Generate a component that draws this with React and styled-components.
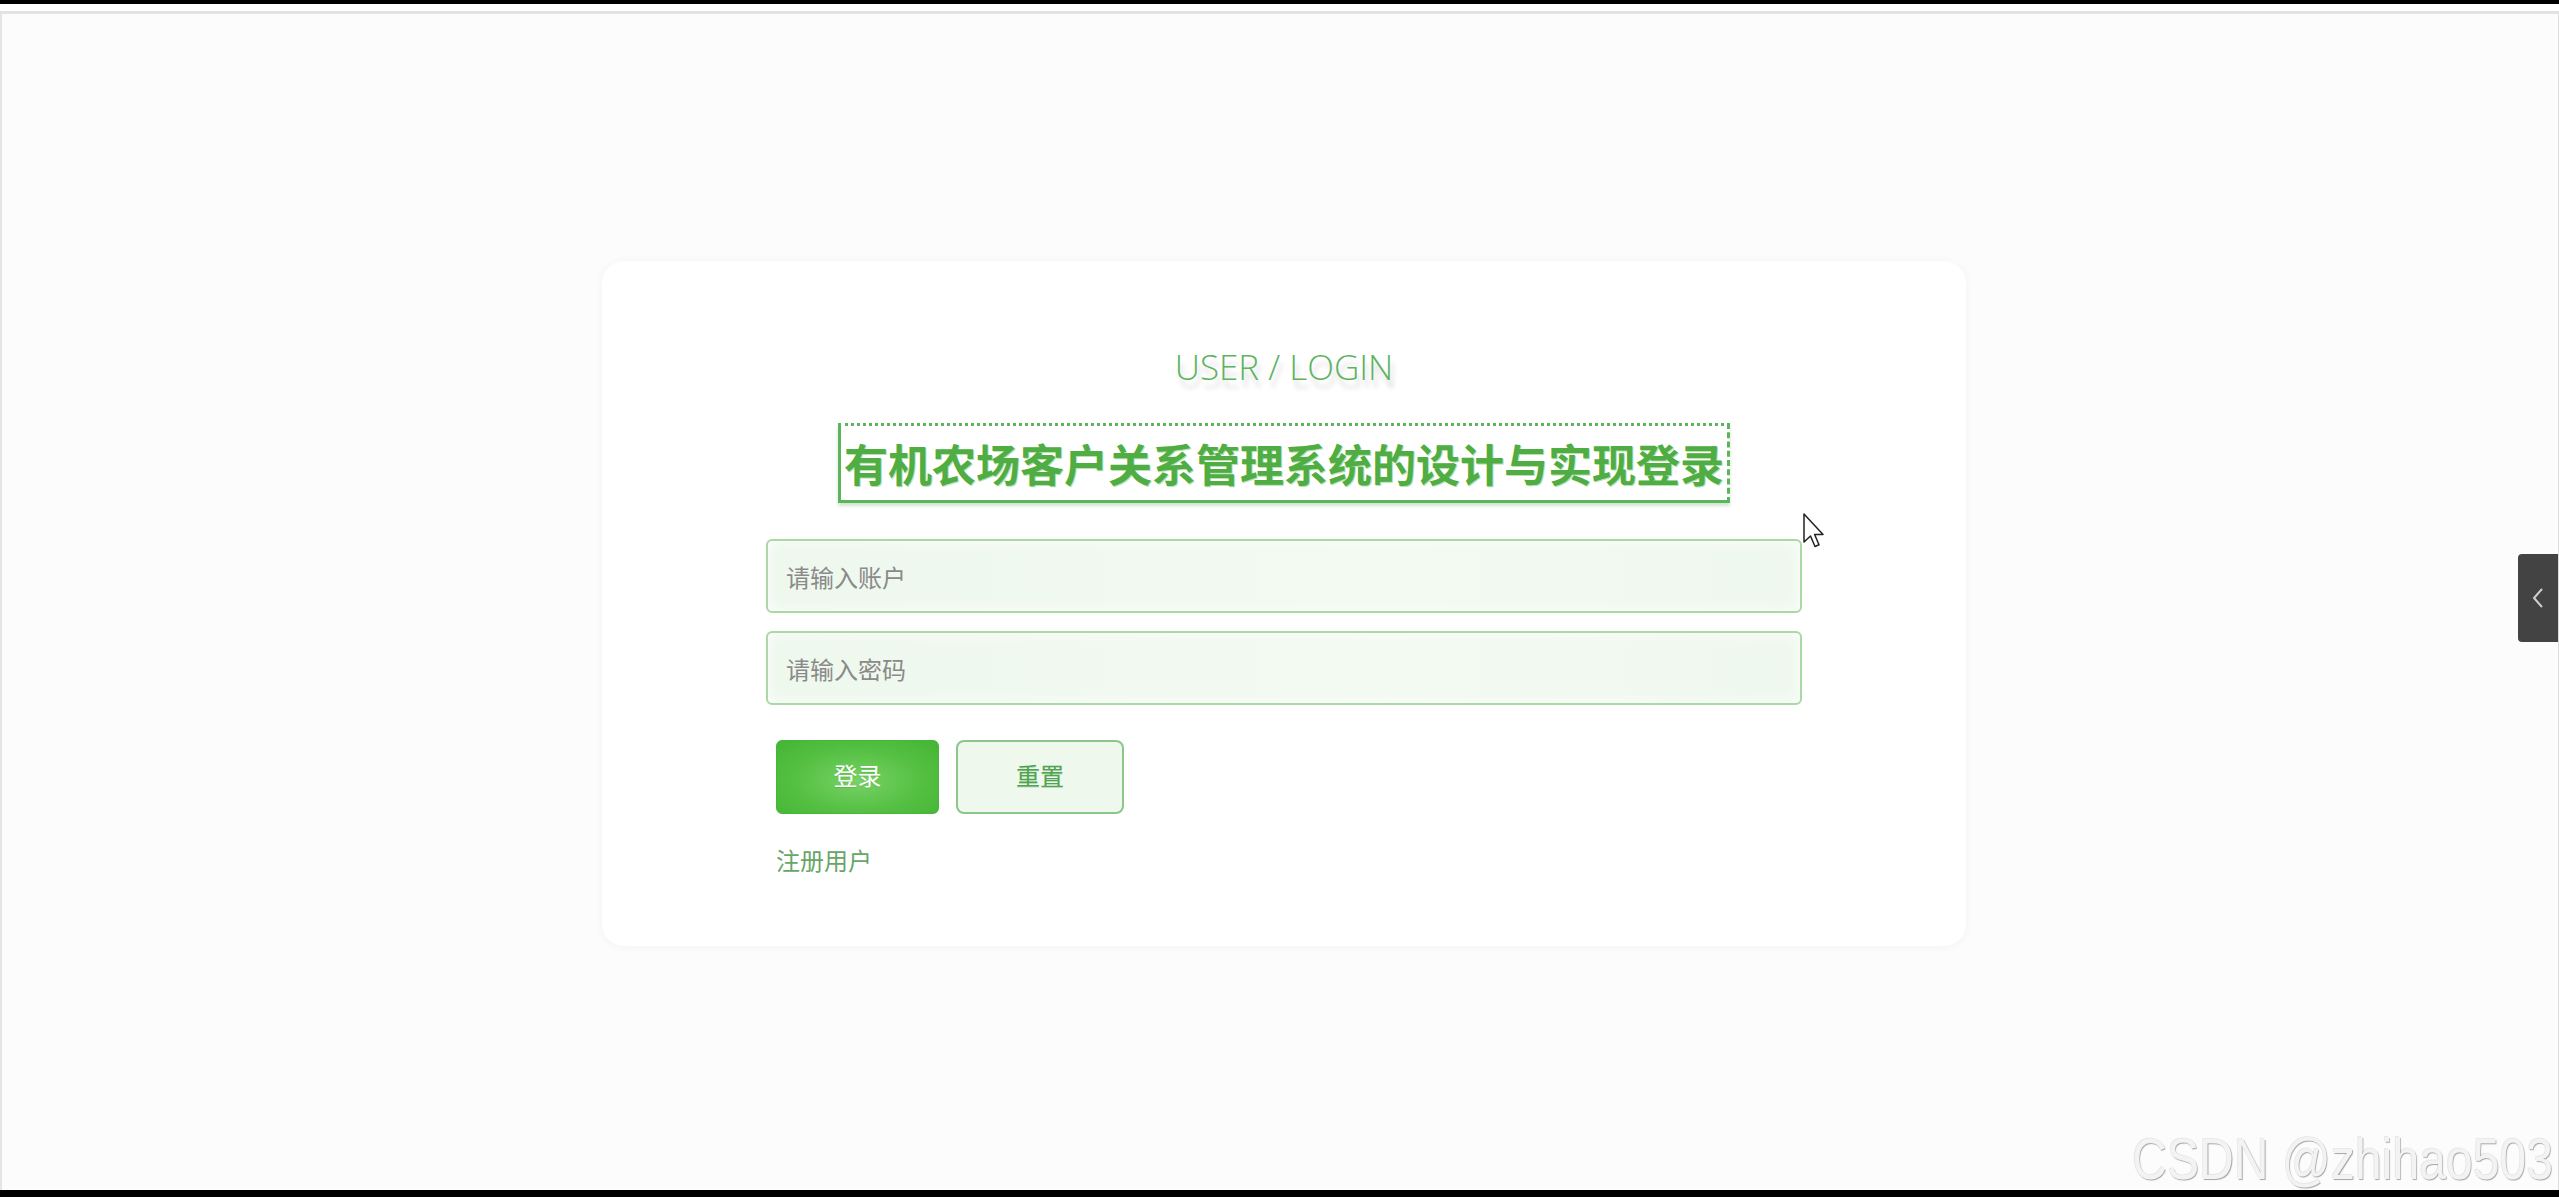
import React from 'react';
import styled, { createGlobalStyle } from 'styled-components';

const GlobalStyle = createGlobalStyle`
    html, body {
        margin: 0;
        padding: 0;
        background: #ffffff;
    }
    * {
        box-sizing: border-box;
    }
`;

const cjk = `"Noto Sans CJK SC", "Noto Sans", sans-serif`;

// Window frame around the recorded page
const Frame = styled.div`
    width: 2559px;
    height: 1197px;
    display: flex;
    flex-direction: column;
    overflow: hidden;
`;

const BlackBar = styled.div`
    height: ${(p) => p.$h}px;
    background: #000;
    flex-shrink: 0;
`;

const TopStrip = styled.div`
    height: 10px;
    background: #fff;
    border-bottom: 3px solid #e2e2e2;
    flex-shrink: 0;
`;

const Page = styled.main`
    position: relative;
    flex: 1;
    display: flex;
    justify-content: center;
    align-items: flex-start;
    padding-left: 8px;
    background: #fcfcfd;
    border-left: 2px solid #e4e4e4;
    border-right: 1px solid #dcdcdc;
`;

const Card = styled.section`
    width: 1364px;
    margin-top: 247px;
    padding: 82px 0 68px;
    background: #fff;
    border-radius: 22px;
    box-shadow: 0 1px 10px rgba(0, 0, 0, 0.045);
    display: flex;
    flex-direction: column;
    align-items: center;
`;

const Subtitle = styled.div`
    font-family: "Open Sans", "Liberation Sans", sans-serif;
    font-weight: 300;
    font-size: 35px;
    line-height: 48px;
    color: #5eb35f;
    text-shadow: 3px 8px 5px rgba(0, 0, 0, 0.16);
`;

const Title = styled.h1`
    margin: 32px 0 0;
    padding: 0 3px;
    height: 80px;
    font-family: ${cjk};
    font-weight: 700;
    font-size: 44px;
    line-height: 74px;
    color: #4fad44;
    text-shadow: 1px 1px 0 #b9e2b0;
    white-space: nowrap;
    border-top: 3px dotted #5cb55a;
    border-left: 3px solid #5cb55a;
    border-right: 3px dashed #5cb55a;
    border-bottom: 3px solid #5cb55a;
    box-shadow: 0 3px 3px rgba(76, 150, 70, 0.25);
`;

const Form = styled.form`
    width: 1036px;
    margin-top: 36px;
    display: flex;
    flex-direction: column;
    gap: 18px;
`;

const Input = styled.input`
    width: 100%;
    height: 74px;
    padding: 0 18px;
    border: 2px solid #a9d9a4;
    border-radius: 6px;
    background: linear-gradient(to right, #eef8ed, #f3faf2 60%, #eff8ee);
    box-shadow: inset 0 0 14px rgba(255, 255, 255, 0.9);
    font-family: ${cjk};
    font-size: 24px;
    color: #333;
    outline: none;

    &::placeholder {
        color: #8a8a8a;
    }
`;

const ButtonRow = styled.div`
    display: flex;
    gap: 17px;
    margin: 17px 0 0 10px;
`;

const Button = styled.button`
    width: ${(p) => (p.$primary ? 163 : 168)}px;
    height: 74px;
    padding: 0 0 6px;
    border-radius: ${(p) => (p.$primary ? 6 : 8)}px;
    font-family: ${cjk};
    font-size: 24px;
    cursor: pointer;
    border: ${(p) => (p.$primary ? '1px solid #47b43a' : '2px solid #8cc68a')};
    background: ${(p) =>
        p.$primary
            ? 'radial-gradient(ellipse at 50% 55%, #78d266 0%, #55c043 55%, #44b534 100%)'
            : '#eef8ec'};
    color: ${(p) => (p.$primary ? '#ffffff' : '#4fa54f')};
    text-shadow: ${(p) => (p.$primary ? '0 1px 1px rgba(0,0,0,0.1)' : '0 1px 0 rgba(60,120,60,0.25)')};
`;

const RegisterLink = styled.a`
    margin: 10px 0 0 10px;
    font-family: ${cjk};
    font-size: 24px;
    line-height: 36px;
    color: #67a667;
    text-decoration: none;
`;

const SideTab = styled.div`
    position: absolute;
    right: 0;
    top: 540px;
    width: 40px;
    height: 88px;
    background: #434343;
    border-radius: 4px 0 0 4px;
    display: flex;
    align-items: center;
    justify-content: center;
`;

const Watermark = styled.div`
    position: absolute;
    right: 5px;
    bottom: 2px;
    font-family: "Liberation Sans", Arial, sans-serif;
    font-size: 58px;
    line-height: 58px;
    color: #f3f3f3;
    text-shadow: 1px 1px 1px rgba(0, 0, 0, 0.35), -1px -1px 0 rgba(0, 0, 0, 0.08);
    transform: scaleX(0.83);
    transform-origin: right bottom;
    white-space: nowrap;
    pointer-events: none;
`;

const Cursor = styled.svg`
    position: absolute;
    left: 1800px;
    top: 499px;
`;

export default function App() {
    return (
        <>
            <GlobalStyle />
            <Frame>
                <BlackBar $h={4} />
                <TopStrip />
                <Page>
                    <Card>
                        <Subtitle>USER / LOGIN</Subtitle>
                        <Title>有机农场客户关系管理系统的设计与实现登录</Title>
                        <Form onSubmit={(e) => e.preventDefault()}>
                            <Input type="text" placeholder="请输入账户" />
                            <Input type="password" placeholder="请输入密码" />
                            <ButtonRow>
                                <Button $primary type="submit">登录</Button>
                                <Button type="reset">重置</Button>
                            </ButtonRow>
                            <RegisterLink href="#">注册用户</RegisterLink>
                        </Form>
                    </Card>
                    <Cursor width="22" height="36" viewBox="0 0 22 36">
                        <path
                            d="M2 1 L2 29 L8.5 23 L13 33.5 L17 31.8 L12.6 21.5 L21 21.5 Z"
                            fill="#fff"
                            stroke="#222"
                            strokeWidth="1.5"
                            strokeLinejoin="round"
                        />
                    </Cursor>
                    <SideTab>
                        <svg width="12" height="22" viewBox="0 0 12 22">
                            <polyline points="10,2 2,11 10,20" fill="none" stroke="#cfcfcf" strokeWidth="2" />
                        </svg>
                    </SideTab>
                    <Watermark>CSDN @zhihao503</Watermark>
                </Page>
                <BlackBar $h={7} />
            </Frame>
        </>
    );
}
